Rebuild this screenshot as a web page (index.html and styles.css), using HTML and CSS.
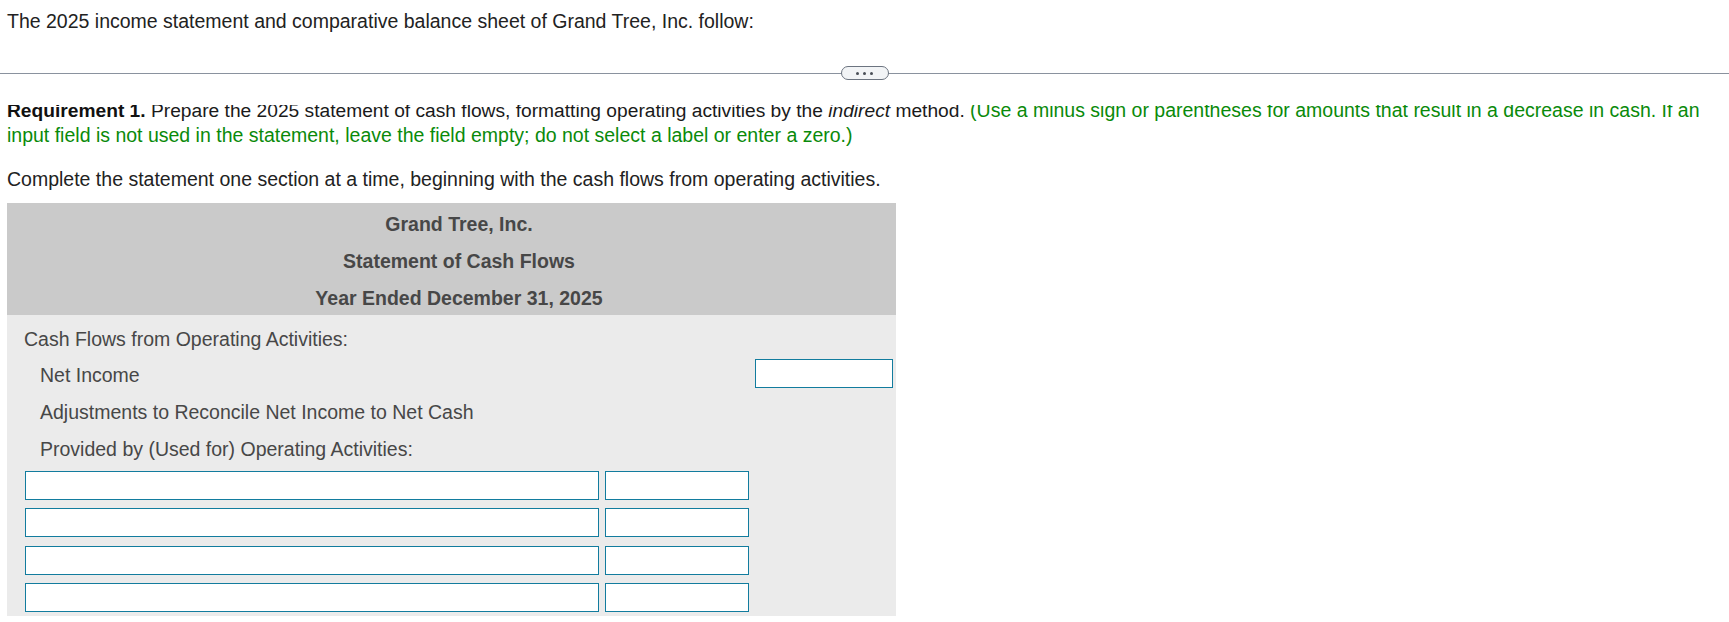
FILE: index.html
```html
<!DOCTYPE html>
<html lang="en">
<head>
<meta charset="utf-8">
<title>Grand Tree, Inc. - Statement of Cash Flows</title>
<link rel="stylesheet" href="styles.css">
</head>
<body>
<p class="intro">The 2025 income statement and comparative balance sheet of Grand Tree, Inc. follow:</p>
<div class="divider"><span class="more"><i></i><i></i><i></i></span></div>
<div class="scroll">
  <div class="scroll-inner">
    <p class="req"><b>Requirement 1.</b> Prepare the 2025 statement of cash flows, formatting operating activities by the <i>indirect</i> method. <span class="hint">(Use a minus sign or parentheses for amounts that result in a decrease in cash. If an input field is not used in the statement, leave the field empty; do not select a label or enter a zero.)</span></p>
    <p class="instr">Complete the statement one section at a time, beginning with the cash flows from operating activities.</p>
    <div class="stmt">
      <div class="stmt-head">
        <div class="head-line">Grand Tree, Inc.</div>
        <div class="head-line">Statement of Cash Flows</div>
        <div class="head-line">Year Ended December 31, 2025</div>
      </div>
      <div class="stmt-body">
        <div class="row"><span class="label sec">Cash Flows from Operating Activities:</span></div>
        <div class="row"><span class="label ind">Net Income</span><input class="cell c3" type="text"></div>
        <div class="row"><span class="label ind">Adjustments to Reconcile Net Income to Net Cash</span></div>
        <div class="row"><span class="label ind">Provided by (Used for) Operating Activities:</span></div>
        <div class="row"><input class="cell c1" type="text"><input class="cell c2" type="text"></div>
        <div class="row"><input class="cell c1" type="text"><input class="cell c2" type="text"></div>
        <div class="row"><input class="cell c1" type="text"><input class="cell c2" type="text"></div>
        <div class="row"><input class="cell c1" type="text"><input class="cell c2" type="text"></div>
      </div>
    </div>
  </div>
</div>
</body>
</html>
```
FILE: styles.css
```css
html, body {
  margin: 0;
  padding: 0;
  background: #ffffff;
}
body {
  font-family: "Liberation Sans", Arial, sans-serif;
  font-size: 19.5px;
  line-height: 25px;
  color: #222222;
  height: 622px;
  overflow: hidden;
}
p { margin: 0; }

.intro {
  padding: 9px 7px 0 7px;
}

.divider {
  margin-top: 32px;
  height: 14px;
  display: flex;
  align-items: center;
  justify-content: center;
  background: linear-gradient(#8a929e, #8a929e) left center / 100% 1px no-repeat;
}
.more {
  width: 46px;
  height: 12px;
  border: 1px solid #6c7480;
  border-radius: 7px;
  background: #f2f4f6;
  display: flex;
  align-items: center;
  justify-content: center;
  gap: 4px;
}
.more i {
  width: 3px;
  height: 3px;
  border-radius: 50%;
  background: #4a4f57;
}

.scroll {
  margin-top: 25px;
  height: 517px;
  overflow: hidden;
}
.scroll-inner {
  margin-top: -7.5px;
  padding: 0 7px;
}
.req {
  font-size: 19.2px;
  color: #1a1a1a;
}
.req b { color: #111; }
.hint {
  font-size: 19.5px;
  color: #0a8a0a;
}
.instr {
  margin-top: 19px;
  color: #222222;
}

.stmt {
  margin-top: 11.5px;
  width: 889px;
}
.stmt-head {
  box-sizing: border-box;
  height: 112px;
  overflow: hidden;
  background: #cacaca;
  padding: 3px 0 0 15px;
}
.head-line {
  height: 37px;
  line-height: 37px;
  text-align: center;
  font-weight: bold;
  color: #474747;
}
.stmt-body {
  background: #ebebeb;
  padding: 2.5px 3px 0 18px;
}
.row {
  height: 37.33px;
  display: grid;
  grid-template-columns: 574px 144px 138px;
  column-gap: 6px;
  align-items: center;
  color: #474747;
}
.label {
  grid-column: 1 / 3;
  box-sizing: border-box;
  height: 37.33px;
  padding-top: 4px;
  line-height: 33.33px;
  white-space: nowrap;
}
.label.sec { margin-left: -1px; padding-top: 5px; line-height: 32.33px; }
.label.ind { margin-left: 15px; }
.cell {
  box-sizing: border-box;
  height: 29px;
  margin: 0;
  padding: 0 4px;
  border: 1px solid #127c9e;
  background: #ffffff;
  font: inherit;
  outline: none;
}
.c1 { grid-column: 1; width: 574px; }
.c2 { grid-column: 2; width: 144px; }
.c3 { grid-column: 3; width: 138px; }
```
